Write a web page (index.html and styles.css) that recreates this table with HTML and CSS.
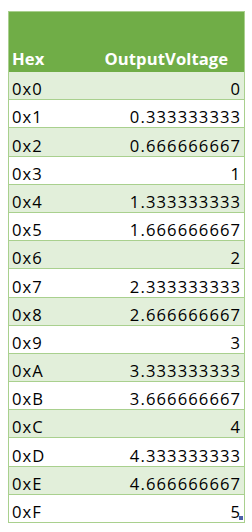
FILE: index.html
```html
<!DOCTYPE html>
<html>
<head>
<meta charset="utf-8">
<link rel="stylesheet" href="styles.css">
</head>
<body>
<div class="sheet">
  <div class="row head"><div class="c a">Hex</div><div class="c b">OutputVoltage</div></div>
  <div class="row alt"><div class="c a">0x0</div><div class="c n">0</div></div>
  <div class="row"><div class="c a">0x1</div><div class="c n">0.333333333</div></div>
  <div class="row alt"><div class="c a">0x2</div><div class="c n">0.666666667</div></div>
  <div class="row"><div class="c a">0x3</div><div class="c n">1</div></div>
  <div class="row alt"><div class="c a">0x4</div><div class="c n">1.333333333</div></div>
  <div class="row"><div class="c a">0x5</div><div class="c n">1.666666667</div></div>
  <div class="row alt"><div class="c a">0x6</div><div class="c n">2</div></div>
  <div class="row"><div class="c a">0x7</div><div class="c n">2.333333333</div></div>
  <div class="row alt"><div class="c a">0x8</div><div class="c n">2.666666667</div></div>
  <div class="row"><div class="c a">0x9</div><div class="c n">3</div></div>
  <div class="row alt"><div class="c a">0xA</div><div class="c n">3.333333333</div></div>
  <div class="row"><div class="c a">0xB</div><div class="c n">3.666666667</div></div>
  <div class="row alt"><div class="c a">0xC</div><div class="c n">4</div></div>
  <div class="row"><div class="c a">0xD</div><div class="c n">4.333333333</div></div>
  <div class="row alt"><div class="c a">0xE</div><div class="c n">4.666666667</div></div>
  <div class="row"><div class="c a">0xF</div><div class="c n last">5<span class="handle"></span></div></div>
</div>
</body>
</html>
```
FILE: styles.css
```css
html, body {
  margin: 0;
  padding: 0;
  background: #ffffff;
}
body {
  font-family: "Open Sans", "Liberation Sans", sans-serif;
  font-size: 16.6px;
  font-weight: 500;
  color: #000000;
}
.sheet {
  margin: 11px 0 0 8px;
  width: 237px;
  border: 1px solid #A9D08E;
  border-bottom: none;
  box-sizing: border-box;
}
.row {
  display: grid;
  grid-template-columns: 94px 1fr;
  height: 28.1875px;
  box-sizing: border-box;
  border-bottom: 1px solid #A9D08E;
  background: #ffffff;
}
.row.alt {
  background: #E2EFDA;
}
.row.head {
  height: 60px;
  border-bottom: none;
  background: #70AD47;
  color: #ffffff;
  font-weight: 700;
}
.c {
  display: flex;
  align-items: flex-end;
  line-height: 16px;
  padding: 0 2.8px 2px 3px;
  letter-spacing: 1.1px;
  white-space: nowrap;
  position: relative;
}
.head .c {
  letter-spacing: 0.1px;
  padding-bottom: 5px;
}
.n {
  justify-content: flex-end;
}
.b {
  justify-content: flex-start;
  padding-left: 1.5px;
}
.handle {
  position: absolute;
  right: 1px;
  bottom: 2px;
  width: 4px;
  height: 4px;
  background: #4A5FA8;
}
```
